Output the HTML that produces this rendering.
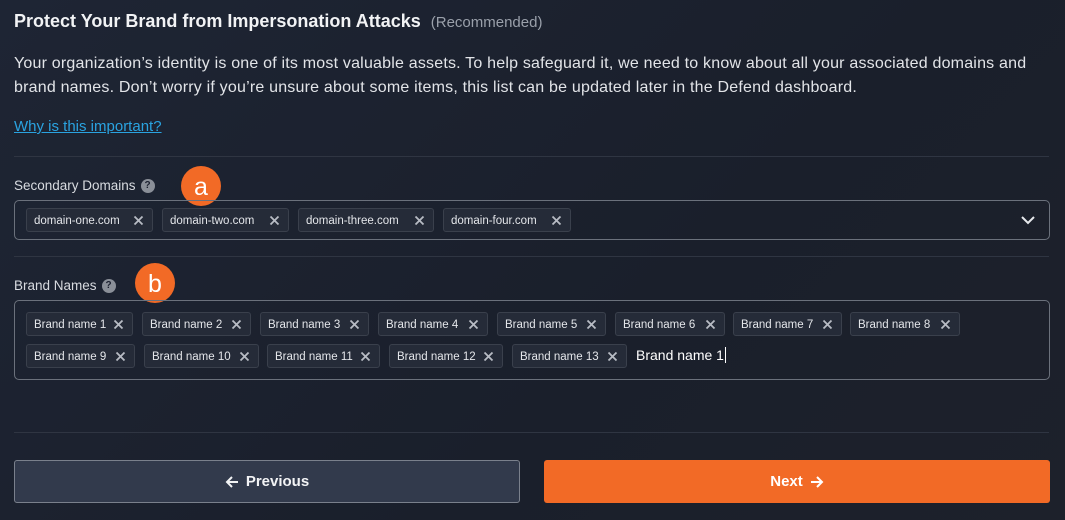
<html><head><style>
body{margin:0;width:1065px;height:520px;background:linear-gradient(135deg,#1e2534,#1a1f2b 60%,#1d212b);font-family:"Liberation Sans",sans-serif;color:#e6e8ec;position:relative;overflow:hidden}
.a{position:absolute}
h1{position:absolute;left:14px;top:11px;margin:0;font-size:18px;font-weight:bold;color:#f2f3f5}
h1 span{font-weight:normal;font-size:15px;color:#9aa0aa;margin-left:10px}
p{position:absolute;left:14px;top:52px;margin:0;font-size:16px;letter-spacing:0.2px;line-height:24px;width:1040px;color:#e2e4e8}
.hr{position:absolute;left:14px;width:1035px;height:1px;background:#2f3542}
.lbl{font-size:13.5px;color:#d8dbe0}
.q{display:inline-block;width:14px;height:14px;border-radius:50%;background:#8a8f98;color:#1c2130;font-size:10px;font-weight:bold;text-align:center;line-height:14px;vertical-align:2px;margin-left:5px}
.badge{position:absolute;width:40px;height:40px;border-radius:50%;background:#f26a26;color:#fff;font-size:25px;text-align:center;line-height:42px}
.box{position:absolute;left:14px;width:1034px;border:1px solid #6b717c;border-radius:5px}
.t{position:absolute;height:24px;border:1px solid #3a404c;background:#252b38;border-radius:3px;font-size:11.5px;line-height:24px;padding-left:7px;box-sizing:border-box;color:#e4e6ea}
.x{position:absolute;right:8px;top:6px;width:11px;height:11px}
.btn{position:absolute;top:460px;height:43px;border-radius:3px;font-size:15px;font-weight:bold;box-sizing:border-box;display:flex;align-items:center;justify-content:center;gap:7px}
</style></head><body>
<h1>Protect Your Brand from Impersonation Attacks<span>(Recommended)</span></h1>
<p>Your organization’s identity is one of its most valuable assets. To help safeguard it, we need to know about all your associated domains and brand names. Don’t worry if you’re unsure about some items, this list can be updated later in the Defend dashboard.</p>
<div class="a" style="left:14px;top:118px;font-size:15px;color:#2aa3e0;text-decoration:underline">Why is this important?</div>
<div class="hr" style="top:156px"></div>
<div class="a lbl" style="left:14px;top:178px">Secondary Domains<span class="q">?</span></div>
<div class="badge" style="left:181px;top:166px">a</div>
<div class="box" style="top:200px;height:38px"></div>
<svg class="a" style="left:1020px;top:214px" width="16" height="12"><path d="M2 3l6 6 6-6" stroke="#e6e8ec" stroke-width="2" fill="none"/></svg>
<div class="hr" style="top:256px"></div>
<div class="a lbl" style="left:14px;top:278px">Brand Names<span class="q">?</span></div>
<div class="badge" style="left:135px;top:263px">b</div>
<div class="box" style="top:300px;height:78px"></div>
<div class="a" style="left:636px;top:347px;font-size:14px;color:#fff">Brand name 1<span style="border-left:1px solid #fff;margin-left:1px"></span></div>
<div class="hr" style="top:432px"></div>
<div class="btn" style="left:14px;width:506px;background:#323a4c;border:1px solid #7a808c;color:#f2f3f5"><svg width="14" height="12"><path d="M13 6H2M7 1L2 6l5 5" stroke="#f2f3f5" stroke-width="2" fill="none"/></svg>Previous</div>
<div class="btn" style="left:544px;width:506px;background:#f26a26;color:#fff">Next<svg width="14" height="12"><path d="M1 6h11M7 1l5 5-5 5" stroke="#fff" stroke-width="2" fill="none"/></svg></div>
<div id="tags"></div>
<script>
var T=[["domain-one.com",26,153,208],["domain-two.com",162,289,208],["domain-three.com",298,434,208],["domain-four.com",443,571,208],
["Brand name 1",26,133,312],["Brand name 2",142,251,312],["Brand name 3",260,369,312],["Brand name 4",378,488,312],["Brand name 5",497,606,312],["Brand name 6",615,725,312],["Brand name 7",733,842,312],["Brand name 8",850,960,312],
["Brand name 9",26,135,344],["Brand name 10",144,259,344],["Brand name 11",267,380,344],["Brand name 12",389,503,344],["Brand name 13",512,627,344]];
var h="";T.forEach(function(t){h+='<div class="t" style="left:'+t[1]+'px;top:'+t[3]+'px;width:'+(t[2]-t[1])+'px">'+t[0]+'<svg class="x" viewBox="0 0 11 11"><path d="M1.5 1.5l8 8M9.5 1.5l-8 8" stroke="#b8bcc4" stroke-width="1.8"/></svg></div>'});
document.getElementById("tags").innerHTML=h;
</script>
</body></html>
